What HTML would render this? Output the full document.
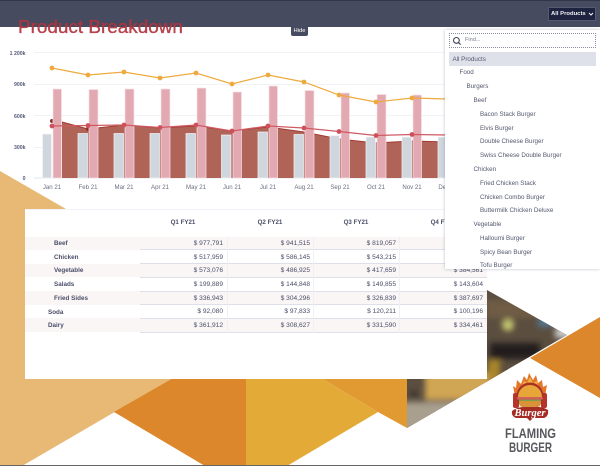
<!DOCTYPE html>
<html><head><meta charset="utf-8">
<style>
html,body{margin:0;padding:0}
body{width:600px;height:466px;overflow:hidden;background:#fff;position:relative;font-family:"Liberation Sans",sans-serif;color:#4a4e68}
.a{position:absolute;white-space:nowrap}
#hdr{left:0;top:0;width:600px;height:27px;background:#474b5f;border-top:1px solid #33364a;box-sizing:border-box}
#title{left:18px;top:17px;font-size:18.9px;line-height:22px;color:rgba(178,52,62,.92);-webkit-text-stroke:.35px rgba(178,52,62,.92)}
#hide{left:291px;top:27px;width:17px;height:9px;background:#474b5f;border-radius:0 0 2px 2px;color:#fff;font-size:5.8px;line-height:9px;text-align:center}
#btn{left:548px;top:7px;width:48px;height:14px;box-sizing:border-box;background:#1e2340;border:1px solid #565b75;border-radius:1px;color:#f2f2f6;font-size:5.9px;font-weight:bold;line-height:12px;padding-left:2px}
#tbl{left:25px;top:209px;width:462px;height:169px;background:#fff;border-top:1px solid #f2f3f8}
.hd{top:9px;font-size:6.2px;font-weight:bold;line-height:8px;width:60px;text-align:center}
.band{left:0;width:462px;height:13.4px;background:#faf6f6}
.ln{left:115px;width:347px;height:1.4px;background:#dddfe9}
.lb{font-size:6.3px;font-weight:bold;line-height:8px}
.v{font-size:6.6px;line-height:8px;text-align:right;width:70px}
.sep{top:27px;width:1px;height:96px;background:#eef0f5}
#dd{left:445px;top:30px;width:155px;height:239px;background:#fff;overflow:hidden;box-shadow:0 0 3px rgba(70,75,100,.35)}
#find{left:4px;top:3px;width:147px;height:15px;box-sizing:border-box;border:1px dotted #8b8e9e;font-size:5.6px;line-height:13px;color:#777b8e;padding-left:15px}
#sel{left:4px;top:22px;width:147px;height:14px;background:#dfe1ea}
.it{font-size:6.25px;line-height:8px;color:#53576e;margin-top:.5px}
.xl{top:183.5px;font-size:6.1px;line-height:8px;color:#6a6e82;width:30px;text-align:center}
.yl{left:4px;width:21.5px;text-align:right;font-size:5.2px;line-height:6px;font-weight:bold;color:#55597a}
.s{filter:blur(.3px)}
</style></head><body>

<svg class="a" style="left:0;top:0" width="600" height="466" viewBox="0 0 600 466">
<defs>
<clipPath id="ph"><polygon points="487,290 567,335 407,428 407,340 440,290"/></clipPath>
<filter id="bl" x="-20%" y="-20%" width="140%" height="140%"><feGaussianBlur stdDeviation="3"/></filter>
</defs>
<polygon points="0,171 66,209 173,378 22,466 0,466" fill="#e7b974"/>
<polygon points="173,378 246,378 246,466 205,466 114,412" fill="#dc872b"/>
<polygon points="246,378 321,378 378,412 287,466 246,466" fill="#e4aa37"/>
<polygon points="321,378 407,378 407,428 378,412" fill="#e19a32"/>
<polygon points="600,317 530,358 600,398" fill="#dc872b"/>
<g clip-path="url(#ph)">
<rect x="400" y="285" width="180" height="150" fill="#5b4e3f"/>
<g filter="url(#bl)">
<rect x="485" y="300" width="50" height="18" fill="#6f5c44"/>
<rect x="490" y="343" width="50" height="16" fill="#221f1c"/>
<circle cx="508" cy="325" r="6" fill="#c2c46e"/>
<rect x="538" y="318" width="14" height="9" fill="#55778f"/>
<rect x="555" y="328" width="16" height="10" fill="#c9c9c9"/>
<rect x="425" y="372" width="65" height="28" fill="#d0a552"/>
<rect x="400" y="402" width="70" height="30" fill="#a89f8e"/>
<rect x="488" y="360" width="12" height="22" fill="#a9862c"/>
<circle cx="414" cy="394" r="4" fill="#3d3630"/>
</g>
</g>
<rect x="0" y="465" width="600" height="1" fill="#666"/>

<!-- logo -->
<g class="s">
<path d="M515,396 L513,386 L516,388 L517,380 L521,384 L524,376 L527,380 L529,373 L533,380 L536,375 L538,383 L542,380 L543,387 L547,385 L545,396 Z" fill="#e2772c"/>
<path d="M522,386 L524,381 L527,383 L530,377 L533,383 L537,381 L538,386 Z" fill="#f3b23c"/>
<rect x="513" y="393" width="6" height="15" rx="2" fill="#b5352c"/>
<rect x="541" y="393" width="6" height="15" rx="2" fill="#b5352c"/>
<circle cx="530" cy="396" r="13.5" fill="#a93128"/>
<path d="M518,397 a12,12 0 0 1 24,0 Z" fill="#e9a638"/>
<rect x="517" y="397" width="26" height="2.6" rx="1" fill="#d0605a"/>
<rect x="519" y="399.6" width="22" height="1.4" fill="#7da044"/>
<path d="M519,401 h22 v2 a4,4 0 0 1 -4,4 h-14 a4,4 0 0 1 -4,-4 Z" fill="#d9923a"/>
<path d="M512,411 Q520,405 530,408 Q540,405 548,410 Q549,416 544,418 L533,418 L530,421 L527,418 L516,418 Q511,416 512,411 Z" fill="#a52c25"/>
<text x="530" y="416" font-family="Liberation Serif,serif" font-style="italic" font-weight="bold" font-size="10" fill="#fff" text-anchor="middle" textLength="31" lengthAdjust="spacingAndGlyphs">Burger</text>
<text x="505" y="438" font-family="Liberation Sans,sans-serif" font-weight="bold" font-size="13.6" fill="#58585e" textLength="51" lengthAdjust="spacingAndGlyphs">FLAMING</text>
<text x="509" y="452" font-family="Liberation Sans,sans-serif" font-weight="bold" font-size="13.6" fill="#58585e" textLength="43" lengthAdjust="spacingAndGlyphs">BURGER</text>
</g>
</svg>

<div class="a" id="hdr"></div>

<svg class="a s" style="left:0;top:0" width="600" height="200" viewBox="0 0 600 200">
<g stroke="#f1f2f6" stroke-width="1">
<path d="M34,52.5H600M34,84.5H600M34,115.5H600M34,147.5H600"/>
</g>
<path d="M34,178H600" stroke="#e3e5ec"/>
<polygon points="62,122 88,129 124,125 160,128 196,126 232,131 268,127 304,132 339,139 376,143 412,141 448,142 448,178 62,178" fill="#b06458"/>
<polyline points="62,122 88,129 124,125 160,128 196,126 232,131 268,127 304,132 339,139 376,143 412,141 448,142" fill="none" stroke="#a23a30" stroke-width="1"/>
<circle cx="52" cy="121" r="2" fill="#8f2f26"/><circle cx="88" cy="129" r="2" fill="#8f2f26"/>
<g fill="#cfd6dd" stroke="#f4f5f8" stroke-width=".7">
<rect x="42.5" y="134" width="9" height="44"/><rect x="78" y="133.5" width="9.5" height="44.5"/><rect x="114" y="133.5" width="9.5" height="44.5"/><rect x="150" y="133.5" width="9.5" height="44.5"/><rect x="186" y="133.5" width="9.5" height="44.5"/><rect x="221.5" y="135" width="9.5" height="43"/><rect x="258" y="132" width="9.5" height="46"/><rect x="294" y="134.5" width="9.5" height="43.5"/><rect x="330" y="135.5" width="9.5" height="42.5"/><rect x="366" y="137" width="9.5" height="41"/><rect x="402" y="137" width="9.5" height="41"/><rect x="438" y="137" width="9.5" height="41"/>
</g>
<g fill="#e3a9b3" stroke="#f7e3e6" stroke-width=".7">
<rect x="53" y="89" width="8.5" height="89"/><rect x="89" y="89.5" width="9" height="88.5"/><rect x="125" y="89" width="9" height="89"/><rect x="161" y="89" width="9" height="89"/><rect x="197" y="88" width="9" height="90"/><rect x="233" y="92" width="8.5" height="86"/><rect x="269" y="86" width="8.5" height="92"/><rect x="305" y="90.5" width="9" height="87.5"/><rect x="341" y="93" width="8.5" height="85"/><rect x="377" y="94.5" width="9" height="83.5"/><rect x="413" y="95" width="8.5" height="83"/><rect x="449" y="95" width="8.5" height="83"/>
</g>
<polyline points="52,68 88,75 124,72 160,78 196,73 232,84 268,75 304,82 339,95 376,102 412,98 448,99" fill="none" stroke="#eeaa3e" stroke-width="1.2"/>
<g fill="#eeaa3e"><circle cx="52" cy="68" r="2.4"/><circle cx="88" cy="75" r="2.4"/><circle cx="124" cy="72" r="2.4"/><circle cx="160" cy="78" r="2.4"/><circle cx="196" cy="73" r="2.4"/><circle cx="232" cy="84" r="2.4"/><circle cx="268" cy="75" r="2.4"/><circle cx="304" cy="82" r="2.4"/><circle cx="339" cy="95" r="2.4"/><circle cx="376" cy="102" r="2.4"/><circle cx="412" cy="98" r="2.4"/></g>
<polyline points="52,126 88,125.5 124,125 160,127.5 196,125 232,131 268,126 304,128 339,131.5 376,135.5 412,134.5 448,135" fill="none" stroke="#d05a63" stroke-width="1.2"/>
<g fill="#cf5058"><circle cx="52" cy="126" r="2.4"/><circle cx="88" cy="125.5" r="2.4"/><circle cx="124" cy="125" r="2.4"/><circle cx="160" cy="127.5" r="2.4"/><circle cx="196" cy="125" r="2.4"/><circle cx="232" cy="131" r="2.4"/><circle cx="268" cy="126" r="2.4"/><circle cx="304" cy="128" r="2.4"/><circle cx="339" cy="131.5" r="2.4"/><circle cx="376" cy="135.5" r="2.4"/><circle cx="412" cy="134.5" r="2.4"/></g>
</svg>

<div class="a yl s" style="top:51px">1 200k</div>
<div class="a yl s" style="top:82px">900k</div>
<div class="a yl s" style="top:114px">600k</div>
<div class="a yl s" style="top:145px">300k</div>
<div class="a yl s" style="top:176px">0</div>
<div class="a xl s" style="left:37px">Jan 21</div>
<div class="a xl s" style="left:73px">Feb 21</div>
<div class="a xl s" style="left:109px">Mar 21</div>
<div class="a xl s" style="left:145px">Apr 21</div>
<div class="a xl s" style="left:181px">May 21</div>
<div class="a xl s" style="left:217px">Jun 21</div>
<div class="a xl s" style="left:253px">Jul 21</div>
<div class="a xl s" style="left:289px">Aug 21</div>
<div class="a xl s" style="left:325px">Sep 21</div>
<div class="a xl s" style="left:361px">Oct 21</div>
<div class="a xl s" style="left:397px">Nov 21</div>
<div class="a xl s" style="left:433px">Dec 21</div>

<div class="a s" id="title">Product Breakdown</div>
<div class="a s" id="hide">Hide</div>
<div class="a s" id="btn">All Products
<svg class="a" style="left:38.5px;top:4px" width="6" height="4" viewBox="0 0 6 4"><path d="M1,1 L3,3 L5,1" fill="none" stroke="#f2f2f6" stroke-width="1"/></svg></div>

<div class="a s" id="tbl">
<div class="a band" style="top:26.7px"></div>
<div class="a band" style="top:54px"></div>
<div class="a band" style="top:81.3px"></div>
<div class="a band" style="top:108.3px"></div>
<div class="a ln" style="top:39px"></div><div class="a ln" style="top:53px"></div><div class="a ln" style="top:66.5px"></div><div class="a ln" style="top:80.5px"></div><div class="a ln" style="top:94px"></div><div class="a ln" style="top:107.5px"></div><div class="a ln" style="top:121.5px"></div>
<div class="a sep" style="left:202px"></div><div class="a sep" style="left:288px"></div><div class="a sep" style="left:374px"></div>
<div class="a hd" style="left:128px;top:8.5px">Q1 FY21</div><div class="a hd" style="left:215px;top:8.5px">Q2 FY21</div><div class="a hd" style="left:301px;top:8.5px">Q3 FY21</div><div class="a hd" style="left:388px;top:8.5px">Q4 FY21</div>

<div class="a lb" style="left:29px;top:30px">Beef</div>
<div class="a lb" style="left:29px;top:43.5px">Chicken</div>
<div class="a lb" style="left:29px;top:57px">Vegetable</div>
<div class="a lb" style="left:29px;top:71px">Salads</div>
<div class="a lb" style="left:29px;top:84.5px">Fried Sides</div>
<div class="a lb" style="left:23px;top:98.5px">Soda</div>
<div class="a lb" style="left:23px;top:112px">Dairy</div>

<div class="a v" style="left:128px;top:29.5px">$ 977,791</div><div class="a v" style="left:215px;top:29.5px">$ 941,515</div><div class="a v" style="left:301px;top:29.5px">$ 819,057</div>
<div class="a v" style="left:128px;top:43.5px">$ 517,959</div><div class="a v" style="left:215px;top:43.5px">$ 586,145</div><div class="a v" style="left:301px;top:43.5px">$ 543,215</div>
<div class="a v" style="left:128px;top:57px">$ 573,076</div><div class="a v" style="left:215px;top:57px">$ 486,925</div><div class="a v" style="left:301px;top:57px">$ 417,659</div><div class="a v" style="left:388px;top:57px">$ 384,561</div>
<div class="a v" style="left:128px;top:71px">$ 199,889</div><div class="a v" style="left:215px;top:71px">$ 144,848</div><div class="a v" style="left:301px;top:71px">$ 149,855</div><div class="a v" style="left:388px;top:71px">$ 143,604</div>
<div class="a v" style="left:128px;top:84.5px">$ 336,943</div><div class="a v" style="left:215px;top:84.5px">$ 304,296</div><div class="a v" style="left:301px;top:84.5px">$ 326,839</div><div class="a v" style="left:388px;top:84.5px">$ 387,697</div>
<div class="a v" style="left:128px;top:98px">$ 92,080</div><div class="a v" style="left:215px;top:98px">$ 97,833</div><div class="a v" style="left:301px;top:98px">$ 120,211</div><div class="a v" style="left:388px;top:98px">$ 100,196</div>
<div class="a v" style="left:128px;top:112px">$ 361,912</div><div class="a v" style="left:215px;top:112px">$ 308,627</div><div class="a v" style="left:301px;top:112px">$ 331,590</div><div class="a v" style="left:388px;top:112px">$ 334,461</div>
</div>

<div class="a s" id="dd">
<div class="a" id="find">Find...
<svg class="a" style="left:2px;top:2px" width="10" height="10" viewBox="0 0 10 10"><circle cx="4.4" cy="4.4" r="2.9" fill="none" stroke="#3f4356" stroke-width="1.1"/><path d="M6.5,6.5 L8.6,8.6" stroke="#3f4356" stroke-width="1.2"/></svg></div>
<div class="a" id="sel"></div>
<div class="a it" style="left:7.5px;top:25px">All Products</div>
<div class="a it" style="left:14.5px;top:38.5px">Food</div>
<div class="a it" style="left:21.5px;top:52.5px">Burgers</div>
<div class="a it" style="left:28.5px;top:66px">Beef</div>
<div class="a it" style="left:35px;top:80px">Bacon Stack Burger</div>
<div class="a it" style="left:35px;top:94px">Elvis Burger</div>
<div class="a it" style="left:35px;top:107.5px">Double Cheese Burger</div>
<div class="a it" style="left:35px;top:121.5px">Swiss Cheese Double Burger</div>
<div class="a it" style="left:28.5px;top:135px">Chicken</div>
<div class="a it" style="left:35px;top:149px">Fried Chicken Stack</div>
<div class="a it" style="left:35px;top:163px">Chicken Combo Burger</div>
<div class="a it" style="left:35px;top:176.5px">Buttermilk Chicken Deluxe</div>
<div class="a it" style="left:28.5px;top:190.5px">Vegetable</div>
<div class="a it" style="left:35px;top:204px">Halloumi Burger</div>
<div class="a it" style="left:35px;top:218px">Spicy Bean Burger</div>
<div class="a it" style="left:35px;top:231.5px">Tofu Burger</div>
</div>

</body></html>
